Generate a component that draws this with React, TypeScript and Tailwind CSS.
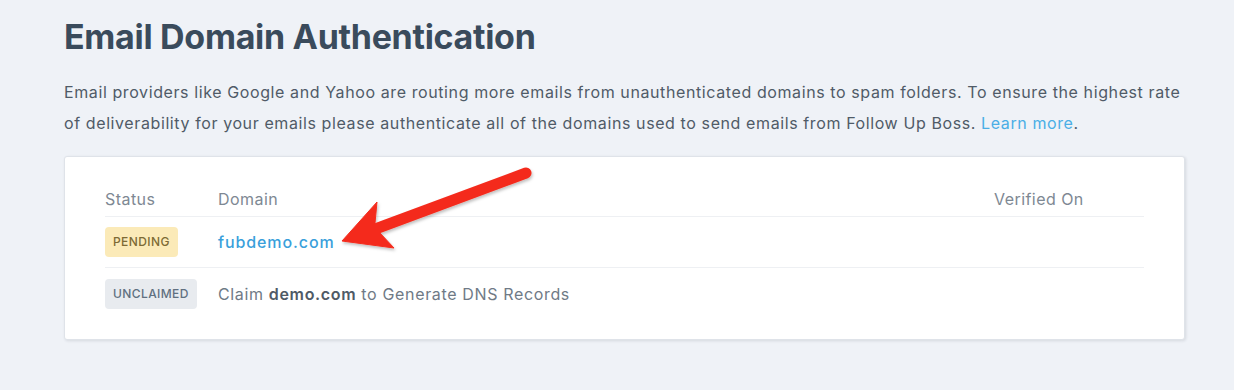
const rows = [
  {
    status: 'Pending',
    badge: 'bg-[#fbeab8] text-[#7d6a35]',
    domain: (
      <a href="#" className="font-medium text-[#3a9fdb] tracking-[0.9px]">
        fubdemo.com
      </a>
    ),
  },
  {
    status: 'Unclaimed',
    badge: 'bg-[#e8ebef] text-[#607080]',
    domain: (
      <span className="tracking-[0.65px] text-[#6f7a86]">
        Claim <span className="font-semibold text-[#4f5a66]">demo.com</span> to Generate DNS Records
      </span>
    ),
  },
];

const Arrow = () => (
  <svg
    className="pointer-events-none absolute left-0 top-0"
    width="1234"
    height="390"
    viewBox="0 0 1234 390"
  >
    <defs>
      <filter id="arrowShadow" x="-10%" y="-10%" width="120%" height="130%">
        <feDropShadow dx="1" dy="2" stdDeviation="1.5" floodColor="#000" floodOpacity="0.25" />
      </filter>
    </defs>
    <g filter="url(#arrowShadow)" fill="#f42c1d" stroke="#f42c1d">
      <line x1="526" y1="173" x2="378" y2="228" strokeWidth="11" strokeLinecap="round" />
      <polygon points="342,241 377,202 375,223 380,233 394,248" strokeWidth="1" strokeLinejoin="round" />
    </g>
  </svg>
);

export default function App() {
  return (
    <div className="relative min-h-[390px] w-full bg-[#eff2f7] font-['Inter',sans-serif]">
      <div className="px-16 pt-[17px]">
        <h1 className="text-[34px] font-bold leading-[40px] tracking-[-0.3px] text-[#3a4b5c]">
          Email Domain Authentication
        </h1>
        <p className="mt-5 w-[1140px] text-[16px] leading-[31px] tracking-[0.6px] text-[#505b67]">
          Email providers like Google and Yahoo are routing more emails from unauthenticated domains to spam folders. To ensure the highest rate
          <br />
          of deliverability for your emails please authenticate all of the domains used to send emails from Follow Up Boss.{' '}
          <a href="#" className="text-[#4aaee6]">Learn more</a>.
        </p>

        <div className="mt-[17px] w-[1121px] rounded-[3px] border border-[#dfe3e9] bg-white px-10 pb-5 pt-6 shadow-[1px_1px_3px_rgba(30,40,60,0.12)]">
          <div className="grid h-[36px] grid-cols-[113px_1fr_150px] items-center border-b border-[#eef0f3] text-[16px] tracking-[0.45px] text-[#7e8893]">
            <div>Status</div>
            <div>Domain</div>
            <div>Verified On</div>
          </div>
          {rows.map((row, i) => (
            <div
              key={row.status}
              className={`grid h-[51px] grid-cols-[113px_1fr_150px] items-center text-[16px] ${
                i < rows.length - 1 ? 'border-b border-[#eef0f3]' : ''
              }`}
            >
              <div>
                <span
                  className={`inline-flex h-[30px] items-center rounded-[4px] px-2 text-[12px] font-medium uppercase tracking-[0.4px] ${row.badge}`}
                >
                  {row.status}
                </span>
              </div>
              <div>{row.domain}</div>
              <div />
            </div>
          ))}
        </div>
      </div>
      <Arrow />
    </div>
  );
}
